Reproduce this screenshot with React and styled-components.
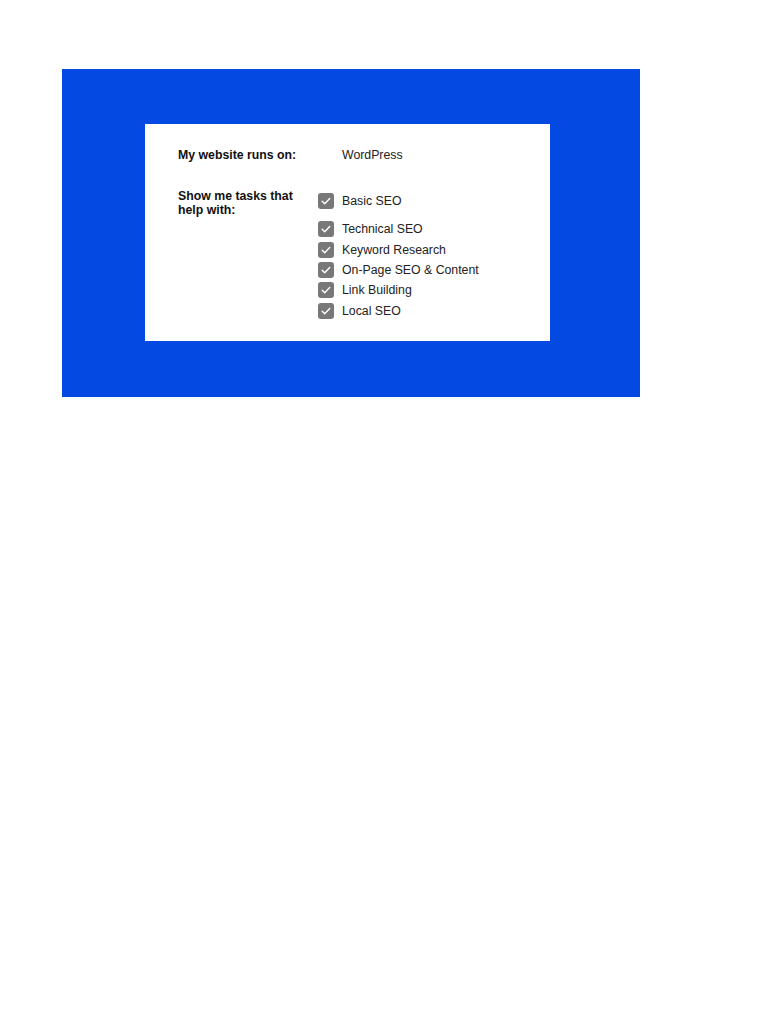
import React from "react"
import styled, { createGlobalStyle } from "styled-components"

const GlobalStyle = createGlobalStyle`
  body {
    margin: 0;
    background: #fff;
    font-family: "Liberation Sans", Arial, sans-serif;
  }
`

const Page = styled.div`
  padding: 69px 0 0 62px;
`

const Banner = styled.div`
  width: 578px;
  box-sizing: border-box;
  padding: 55px 90px 56px 83px;
  background: #0349e2;
`

const Card = styled.div`
  display: grid;
  grid-template-columns: 140px 1fr;
  row-gap: 26px;
  padding: 23px 20px 20px 33px;
  background: #fff;
`

const Label = styled.div`
  font-size: 12.3px;
  font-weight: 700;
  line-height: ${p => (p.$tight ? "14px" : "16px")};
  color: #111;
  padding-right: 10px;
`

const Value = styled.div`
  font-size: 12.3px;
  line-height: 16px;
  color: #222;
  padding-left: 24px;
`

const Checklist = styled.ul`
  list-style: none;
  margin: 0;
  padding: 2px 0 0;
`

const Item = styled.li`
  display: flex;
  align-items: center;
  gap: 8px;
  height: 20.3px;
  margin-bottom: ${p => (p.$spaced ? "8px" : "0")};
  font-size: 12.3px;
  color: #222;
`

const Box = styled.span`
  display: inline-flex;
  align-items: center;
  justify-content: center;
  width: 16px;
  height: 16px;
  border-radius: 3px;
  background: #787878;
`

const Check = () => (
  <Box>
    <svg width="12" height="12" viewBox="0 0 12 12" fill="none">
      <path
        d="M2.2 6.2l2.5 2.5 5-5.2"
        stroke="#fff"
        strokeWidth="1.4"
        strokeLinecap="round"
        strokeLinejoin="round"
      />
    </svg>
  </Box>
)

const topics = [
  "Basic SEO",
  "Technical SEO",
  "Keyword Research",
  "On-Page SEO & Content",
  "Link Building",
  "Local SEO"
]

const App = () => {
  return (
    <Page>
      <GlobalStyle />
      <Banner>
        <Card>
          <Label>My website runs on:</Label>
          <Value>WordPress</Value>
          <Label $tight>Show me tasks that help with:</Label>
          <Checklist>
            {topics.map((topic, i) => (
              <Item key={topic} $spaced={i === 0}>
                <Check />
                {topic}
              </Item>
            ))}
          </Checklist>
        </Card>
      </Banner>
    </Page>
  )
}

export default App
